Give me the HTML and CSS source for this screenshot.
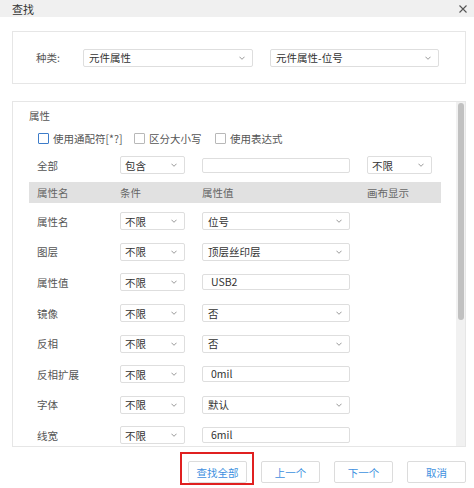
FILE: index.html
```html
<!doctype html>
<html lang="zh">
    <head>
        <meta charset="utf-8">
        <title>查找</title>
        <link rel="stylesheet" href="styles.css">
    </head>
    <body>
        <div class="titlebar">
            <span>查找</span>
            <svg class="close" viewBox="0 0 8 8"><path d="M0.5 0.5L7.5 7.5M7.5 0.5L0.5 7.5"/></svg>
        </div>

        <div class="kind-box">
            <span class="kind-label">种类:</span>
            <div class="select kind-sel">元件属性<svg class="chev" viewBox="0 0 7 4"><path d="M0.5 0.5L3.5 3.5L6.5 0.5"/></svg></div>
            <div class="select kind-sel2">元件属性-位号<svg class="chev" viewBox="0 0 7 4"><path d="M0.5 0.5L3.5 3.5L6.5 0.5"/></svg></div>
        </div>

        <div class="prop-box">
            <div class="prop-inner">
                <div class="section-title">属性</div>
                <div class="options">
                    <label class="opt opt1"><span class="cb focus"></span>使用通配符[*?]</label>
                    <label class="opt opt2"><span class="cb"></span>区分大小写</label>
                    <label class="opt"><span class="cb"></span>使用表达式</label>
                </div>
                <div class="row all-row">
                    <span>全部</span>
                    <div class="select cond">包含<svg class="chev" viewBox="0 0 7 4"><path d="M0.5 0.5L3.5 3.5L6.5 0.5"/></svg></div>
                    <div class="field small"></div>
                    <div class="select cond">不限<svg class="chev" viewBox="0 0 7 4"><path d="M0.5 0.5L3.5 3.5L6.5 0.5"/></svg></div>
                </div>
                <div class="row head">
                    <span>属性名</span><span>条件</span><span>属性值</span><span>画布显示</span>
                </div>
                <div class="row item">
                    <span>属性名</span>
                    <div class="select cond">不限<svg class="chev" viewBox="0 0 7 4"><path d="M0.5 0.5L3.5 3.5L6.5 0.5"/></svg></div>
                    <div class="select val">位号<svg class="chev" viewBox="0 0 7 4"><path d="M0.5 0.5L3.5 3.5L6.5 0.5"/></svg></div>
                </div>
                <div class="row item">
                    <span>图层</span>
                    <div class="select cond">不限<svg class="chev" viewBox="0 0 7 4"><path d="M0.5 0.5L3.5 3.5L6.5 0.5"/></svg></div>
                    <div class="select val">顶层丝印层<svg class="chev" viewBox="0 0 7 4"><path d="M0.5 0.5L3.5 3.5L6.5 0.5"/></svg></div>
                </div>
                <div class="row item">
                    <span>属性值</span>
                    <div class="select cond">不限<svg class="chev" viewBox="0 0 7 4"><path d="M0.5 0.5L3.5 3.5L6.5 0.5"/></svg></div>
                    <div class="field">USB2</div>
                </div>
                <div class="row item">
                    <span>镜像</span>
                    <div class="select cond">不限<svg class="chev" viewBox="0 0 7 4"><path d="M0.5 0.5L3.5 3.5L6.5 0.5"/></svg></div>
                    <div class="select val">否<svg class="chev" viewBox="0 0 7 4"><path d="M0.5 0.5L3.5 3.5L6.5 0.5"/></svg></div>
                </div>
                <div class="row item">
                    <span>反相</span>
                    <div class="select cond">不限<svg class="chev" viewBox="0 0 7 4"><path d="M0.5 0.5L3.5 3.5L6.5 0.5"/></svg></div>
                    <div class="select val">否<svg class="chev" viewBox="0 0 7 4"><path d="M0.5 0.5L3.5 3.5L6.5 0.5"/></svg></div>
                </div>
                <div class="row item">
                    <span>反相扩展</span>
                    <div class="select cond">不限<svg class="chev" viewBox="0 0 7 4"><path d="M0.5 0.5L3.5 3.5L6.5 0.5"/></svg></div>
                    <div class="field">0mil</div>
                </div>
                <div class="row item">
                    <span>字体</span>
                    <div class="select cond">不限<svg class="chev" viewBox="0 0 7 4"><path d="M0.5 0.5L3.5 3.5L6.5 0.5"/></svg></div>
                    <div class="select val">默认<svg class="chev" viewBox="0 0 7 4"><path d="M0.5 0.5L3.5 3.5L6.5 0.5"/></svg></div>
                </div>
                <div class="row item">
                    <span>线宽</span>
                    <div class="select cond">不限<svg class="chev" viewBox="0 0 7 4"><path d="M0.5 0.5L3.5 3.5L6.5 0.5"/></svg></div>
                    <div class="field">6mil</div>
                </div>
            </div>
            <div class="scrollbar"><div class="thumb"></div></div>
        </div>

        <div class="actions">
            <button class="btn marked">查找全部</button>
            <button class="btn">上一个</button>
            <button class="btn">下一个</button>
            <button class="btn">取消</button>
        </div>
    </body>
</html>
```

FILE: styles.css
```css
body{
    margin: 0;
    width: 474px;
    height: 488px;
    overflow: hidden;
    background: #fff;
    font-family: "Noto Sans CJK SC", "Noto Sans", sans-serif;
    font-size: 10.5px;
    color: #555;
}
.titlebar{
    height: 17px;
    background: #f0f0f0;
    display: flex;
    align-items: center;
    justify-content: space-between;
    padding: 0 7px 0 12px;
    color: #333;
    font-size: 11px;
}
.close{
    width: 8px;
    height: 8px;
    fill: none;
    stroke: #555;
    stroke-width: 1.1;
}
.kind-box{
    margin: 14px 8px 0 12px;
    height: 53px;
    box-sizing: border-box;
    border: 1px solid #e6e6e6;
    display: flex;
    align-items: center;
    padding-left: 23px;
}
.kind-label{
    width: 47px;
}
.kind-sel{
    width: 170px;
}
.kind-sel2{
    width: 169px;
    margin-left: 17px;
}
.select{
    box-sizing: border-box;
    height: 18px;
    border: 1px solid #dedede;
    border-radius: 2px;
    background: #fff;
    display: flex;
    align-items: center;
    justify-content: space-between;
    padding: 0 7px 0 5px;
    color: #333;
}
.chev{
    width: 6px;
    height: 4px;
    fill: none;
    stroke: #888;
    stroke-width: 1;
}
.prop-box{
    margin: 17px 8px 0 12px;
    height: 346px;
    box-sizing: border-box;
    border: 1px solid #e6e6e6;
    display: flex;
    overflow: hidden;
}
.prop-inner{
    flex: 1;
    padding-left: 16px;
    overflow: hidden;
}
.scrollbar{
    width: 9px;
    margin-top: -1px;
    background: #f1f1f1;
}
.thumb{
    margin: 2px 1px 0 2px;
    height: 217px;
    background: #c1c1c1;
    border-radius: 3px;
}
.section-title{
    margin-top: 6px;
    height: 16px;
    line-height: 16px;
}
.options{
    margin-top: 5px;
    height: 18px;
    display: flex;
    align-items: center;
    padding-left: 9px;
}
.opt{
    display: flex;
    align-items: center;
    gap: 4px;
}
.opt1{
    width: 96px;
}
.opt2{
    width: 81px;
}
.cb{
    width: 11px;
    height: 11px;
    box-sizing: border-box;
    border: 1px solid #b8b8b8;
    border-radius: 1px;
}
.cb.focus{
    border-color: #3d7cc9;
}
.row{
    display: grid;
    grid-template-columns: 83px 82px 165px auto;
    align-items: center;
    padding-left: 8px;
}
.all-row{
    margin-top: 8px;
    height: 20px;
}
.head{
    margin-top: 7px;
    height: 21px;
    width: 412px;
    box-sizing: border-box;
    background: #e1e1e1;
    color: #666;
}
.item{
    height: 30.6px;
}
.head + .item{
    margin-top: 3px;
}
.cond{
    width: 65px;
    padding-left: 4px;
}
.val{
    width: 148px;
}
.field{
    box-sizing: border-box;
    width: 148px;
    height: 16px;
    line-height: 14px;
    border: 1px solid #dedede;
    border-radius: 2px;
    padding-left: 8px;
    color: #333;
}
.field.small{
    height: 15px;
}
.actions{
    margin-top: 14px;
    display: flex;
    justify-content: flex-end;
    gap: 14px;
    padding-right: 8px;
}
.btn{
    width: 59px;
    height: 22px;
    padding: 0;
    border: 1px solid #dcdcdc;
    border-radius: 2px;
    background: #fff;
    color: #3d8fe0;
    font: inherit;
}
.marked{
    position: relative;
}
.marked::after{
    content: "";
    position: absolute;
    left: -9px;
    right: -8px;
    top: -10px;
    bottom: -3px;
    border: 2px solid #e02020;
}
```
